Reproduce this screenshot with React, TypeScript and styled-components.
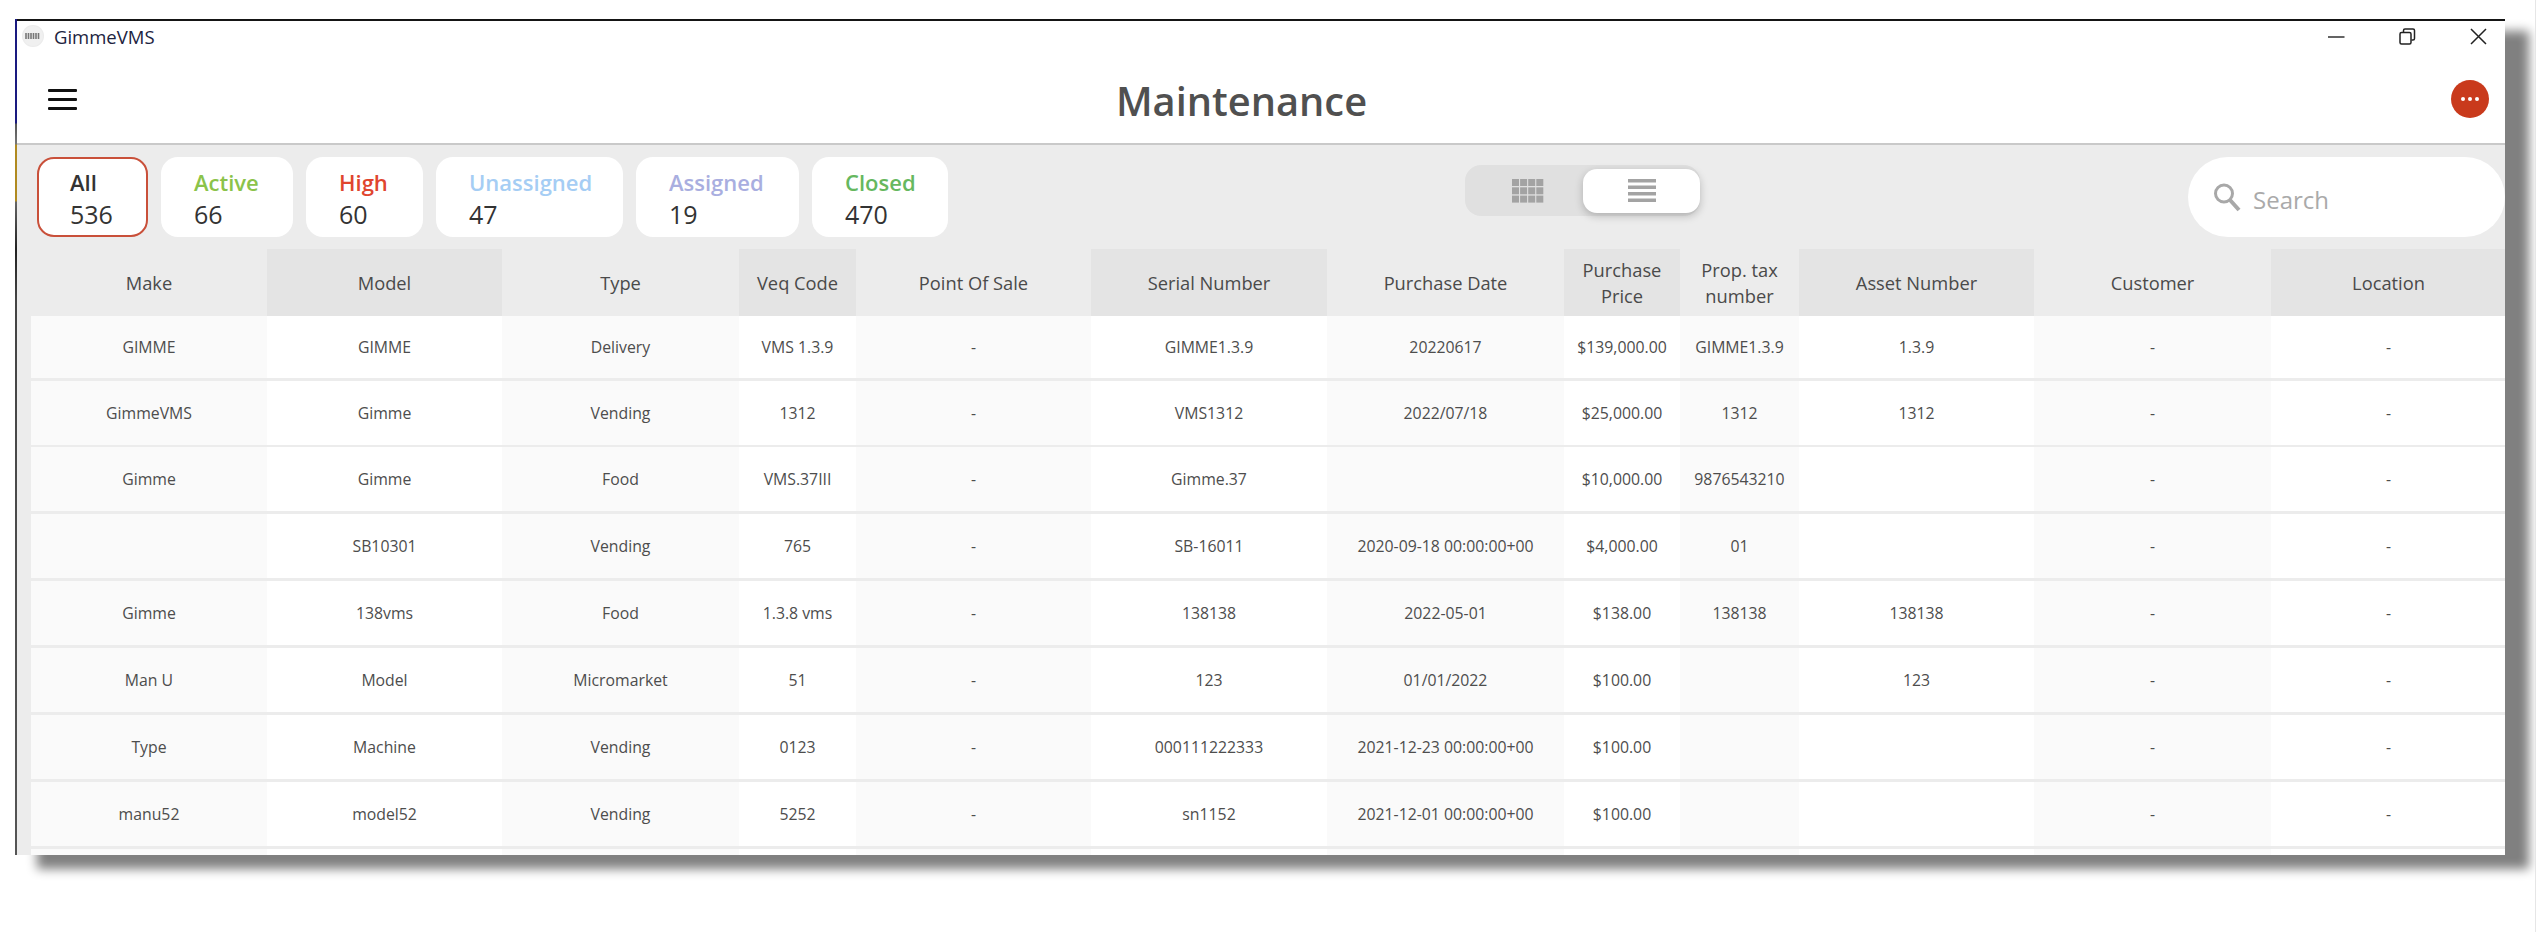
import React from "react";
import styled, { createGlobalStyle } from "styled-components";

const GlobalStyle = createGlobalStyle`
  html, body {
    margin: 0;
    padding: 0;
    background: #fff;
    font-family: "Open Sans", "Noto Sans", sans-serif;
  }
`;

const chips = [
  { label: "All", count: 536, color: "#333333", selected: true, width: 111 },
  { label: "Active", count: 66, color: "#8bc34a", width: 132 },
  { label: "High", count: 60, color: "#e0452e", width: 117 },
  { label: "Unassigned", count: 47, color: "#a5cdf4", width: 187 },
  { label: "Assigned", count: 19, color: "#a9aee0", width: 163 },
  { label: "Closed", count: 470, color: "#66b85f", width: 136 },
];

const columns = [
  "Make",
  "Model",
  "Type",
  "Veq Code",
  "Point Of Sale",
  "Serial Number",
  "Purchase Date",
  "Purchase Price",
  "Prop. tax number",
  "Asset Number",
  "Customer",
  "Location",
];

const rows = [
  ["GIMME", "GIMME", "Delivery", "VMS 1.3.9", "-", "GIMME1.3.9", "20220617", "$139,000.00", "GIMME1.3.9", "1.3.9", "-", "-"],
  ["GimmeVMS", "Gimme", "Vending", "1312", "-", "VMS1312", "2022/07/18", "$25,000.00", "1312", "1312", "-", "-"],
  ["Gimme", "Gimme", "Food", "VMS.37III", "-", "Gimme.37", "", "$10,000.00", "9876543210", "", "-", "-"],
  ["", "SB10301", "Vending", "765", "-", "SB-16011", "2020-09-18 00:00:00+00", "$4,000.00", "01", "", "-", "-"],
  ["Gimme", "138vms", "Food", "1.3.8 vms", "-", "138138", "2022-05-01", "$138.00", "138138", "138138", "-", "-"],
  ["Man U", "Model", "Micromarket", "51", "-", "123", "01/01/2022", "$100.00", "", "123", "-", "-"],
  ["Type", "Machine", "Vending", "0123", "-", "000111222333", "2021-12-23 00:00:00+00", "$100.00", "", "", "-", "-"],
  ["manu52", "model52", "Vending", "5252", "-", "sn1152", "2021-12-01 00:00:00+00", "$100.00", "", "", "-", "-"],
  ["", "", "", "", "", "", "", "", "", "", "", ""],
];

const gridColumns = "236px 235px 237px 117px 235px 236px 237px 116px 119px 235px 237px 235px";

const Page = styled.div`
  width: 2536px;
  height: 932px;
  box-sizing: border-box;
  padding: 19px 0 0 15px;
  border-right: 1px solid #e6e6e6;
  overflow: hidden;
`;

const Frame = styled.div`
  display: flex;
  width: 2490px;
  height: 836px;
  box-shadow: 23px 13px 10px 1px #808080;
`;

const LeftEdge = styled.div`
  width: 2px;
  flex-shrink: 0;
  background: linear-gradient(
    to bottom,
    #1a1a80 0,
    #1a1a80 104px,
    #555 105px,
    #777 125px,
    #b08a20 126px,
    #b08a20 182px,
    #666 183px,
    #222 230px,
    #444 280px,
    #555 100%
  );
`;

const Window = styled.div`
  flex: 1;
  min-width: 0;
  display: flex;
  flex-direction: column;
  border-top: 2px solid #151515;
  background: #fff;
  overflow: hidden;
`;

const TitleBar = styled.div`
  display: flex;
  align-items: center;
  height: 30px;
  padding: 0 0 0 5px;
  flex-shrink: 0;
`;

const AppIcon = styled.div`
  width: 22px;
  height: 22px;
  border-radius: 50%;
  background: radial-gradient(circle, #f0f0f0 60%, #d6d6d6 100%);
  display: flex;
  align-items: center;
  justify-content: center;
`;

const AppName = styled.span`
  margin-left: 10px;
  font-size: 18.5px;
  color: #1c2340;
`;

const WindowButtons = styled.div`
  display: flex;
  align-items: center;
  margin-left: auto;
  padding-right: 18px;
  gap: 54px;
`;

const Header = styled.header`
  display: flex;
  align-items: center;
  justify-content: space-between;
  height: 94px;
  padding: 4px 16px 0 31px;
  box-sizing: border-box;
  border-bottom: 2px solid #c9c9c9;
  flex-shrink: 0;
`;

const MenuButton = styled.div`
  display: flex;
  flex-direction: column;
  justify-content: space-between;
  width: 29px;
  height: 21px;
`;

const MenuLine = styled.span`
  display: block;
  height: 3px;
  border-radius: 1px;
  background: #111;
`;

const Title = styled.h1`
  margin: 4px 0 0 0;
  padding-right: 45px;
  font-size: 39.8px;
  font-weight: 600;
  line-height: 1;
  color: #505050;
`;

const MoreButton = styled.div`
  width: 38px;
  height: 38px;
  border-radius: 50%;
  background: #c93a1c;
  display: flex;
  align-items: center;
  justify-content: center;
  gap: 3px;
`;

const Dot = styled.span`
  width: 4px;
  height: 4px;
  border-radius: 50%;
  background: #fff;
`;

const Content = styled.div`
  flex: 1;
  min-height: 0;
  display: flex;
  flex-direction: column;
  background: #ececec;
  padding: 12px 0 0 14px;
`;

const Toolbar = styled.div`
  display: flex;
  align-items: flex-start;
  height: 80px;
  padding-left: 6px;
  margin-bottom: 12px;
  flex-shrink: 0;
`;

const ChipRow = styled.div`
  display: flex;
  gap: 13px;
`;

const Chip = styled.div<{ $selected?: boolean; $width: number }>`
  width: ${(p) => p.$width}px;
  height: 80px;
  box-sizing: border-box;
  padding-left: ${(p) => (p.$selected ? 31 : 33)}px;
  padding-top: ${(p) => (p.$selected ? 8 : 10)}px;
  border-radius: 17px;
  background: #fff;
  border: ${(p) => (p.$selected ? "2px solid #c9503a" : "none")};
`;

const ChipLabel = styled.div<{ $color: string }>`
  font-size: 22px;
  line-height: 30px;
  font-weight: 600;
  color: ${(p) => p.$color};
`;

const ChipCount = styled.div`
  font-size: 25px;
  line-height: 35px;
  color: #333;
`;

const ViewToggle = styled.div`
  display: flex;
  align-items: center;
  justify-content: space-between;
  width: 235px;
  height: 51px;
  margin: 8px 0 0 517px;
  border-radius: 16px;
  background: #e0e0e0;
`;

const ViewOption = styled.div<{ $active?: boolean }>`
  display: flex;
  align-items: center;
  justify-content: center;
  width: 117px;
  height: 44px;
  box-sizing: border-box;
  padding-left: ${(p) => (p.$active ? 0 : 8)}px;
  border-radius: 14px;
  background: ${(p) => (p.$active ? "#fff" : "transparent")};
  box-shadow: ${(p) => (p.$active ? "0 3px 8px rgba(0, 0, 0, 0.22)" : "none")};
`;

const SearchBox = styled.div`
  display: flex;
  align-items: center;
  width: 317px;
  height: 80px;
  margin-left: auto;
  box-sizing: border-box;
  padding-left: 24px;
  border-radius: 40px;
  background: #fff;
`;

const SearchText = styled.span`
  margin-left: 11px;
  padding-top: 5px;
  font-size: 24px;
  color: #aaaaaa;
`;

const Table = styled.div`
  flex: 1;
  min-height: 0;
  overflow: hidden;
`;

const HeadRow = styled.div`
  display: grid;
  grid-template-columns: ${gridColumns};
  height: 67px;
`;

const HeadCell = styled.div<{ $shaded: boolean }>`
  display: flex;
  align-items: center;
  justify-content: center;
  text-align: center;
  padding: 0 8px;
  font-size: 18.3px;
  line-height: 26px;
  color: #4a4a4a;
  background: ${(p) => (p.$shaded ? "#e4e4e4" : "#ececec")};
`;

const BodyRow = styled.div`
  display: grid;
  grid-template-columns: ${gridColumns};
  height: 64px;
  margin-bottom: 2.9px;

  &:nth-child(2) {
    height: 61.7px;
  }
`;

const Cell = styled.div<{ $shaded: boolean }>`
  display: flex;
  align-items: center;
  justify-content: center;
  white-space: nowrap;
  font-size: 15.8px;
  color: #4d4d4d;
  background: ${(p) => (p.$shaded ? "#ffffff" : "#fafafa")};
`;

export default function App() {
  return (
    <Page>
      <GlobalStyle />
      <Frame>
        <LeftEdge />
        <Window>
          <TitleBar>
            <AppIcon>
              <svg width="16" height="8" viewBox="0 0 16 8">
                <path d="M1 1v6M3.500 1v6M6 1v6M8.500 1v6M11 1v6M13.500 1v6" stroke="#777" strokeWidth="1.6" />
              </svg>
            </AppIcon>
            <AppName>GimmeVMS</AppName>
            <WindowButtons>
              <svg width="17" height="17" viewBox="0 0 17 17">
                <path d="M0 9h16.500" stroke="#222" strokeWidth="1.4" />
              </svg>
              <svg width="17" height="17" viewBox="0 0 17 17" fill="none" stroke="#222" strokeWidth="1.5">
                <rect x="1" y="4.500" width="11" height="11.500" rx="1.500" />
                <path d="M4.500 4V2.500q0-1.500 1.500-1.500h8q1.500 0 1.500 1.500v8q0 1.500-1.500 1.500h-1.500" />
              </svg>
              <svg width="17" height="17" viewBox="0 0 17 17" stroke="#222" strokeWidth="1.5">
                <path d="M1 1l15 15M16 1L1 16" />
              </svg>
            </WindowButtons>
          </TitleBar>
          <Header>
            <MenuButton>
              <MenuLine />
              <MenuLine />
              <MenuLine />
            </MenuButton>
            <Title>Maintenance</Title>
            <MoreButton>
              <Dot />
              <Dot />
              <Dot />
            </MoreButton>
          </Header>
          <Content>
            <Toolbar>
              <ChipRow>
                {chips.map((chip) => (
                  <Chip key={chip.label} $selected={chip.selected} $width={chip.width}>
                    <ChipLabel $color={chip.color}>{chip.label}</ChipLabel>
                    <ChipCount>{chip.count}</ChipCount>
                  </Chip>
                ))}
              </ChipRow>
              <ViewToggle>
                <ViewOption>
                  <svg width="32" height="24" viewBox="0 0 32 24" fill="#a3a3a3">
                    {[0, 8.3, 16.6].map((y) =>
                      [0, 8.1, 16.2, 24.3].map((x) => (
                        <rect key={`${x}-${y}`} x={x} y={y} width="7" height="7" />
                      ))
                    )}
                  </svg>
                </ViewOption>
                <ViewOption $active>
                  <svg width="28" height="24" viewBox="0 0 28 24" fill="#a3a3a3">
                    {[0, 6.5, 13, 19.5].map((y) => (
                      <rect key={y} x="0" y={y} width="28" height="3.5" />
                    ))}
                  </svg>
                </ViewOption>
              </ViewToggle>
              <SearchBox>
                <svg width="30" height="30" viewBox="0 0 30 30" fill="none" stroke="#a8a8a8">
                  <circle cx="12" cy="11.500" r="8.500" strokeWidth="3" />
                  <path d="M18 18l9 10" strokeWidth="4" />
                </svg>
                <SearchText>Search</SearchText>
              </SearchBox>
            </Toolbar>
            <Table>
              <HeadRow>
                {columns.map((column, i) => (
                  <HeadCell key={column} $shaded={i % 2 === 1}>
                    {column}
                  </HeadCell>
                ))}
              </HeadRow>
              {rows.map((row, r) => (
                <BodyRow key={r}>
                  {row.map((value, i) => (
                    <Cell key={i} $shaded={i % 2 === 1}>
                      {value}
                    </Cell>
                  ))}
                </BodyRow>
              ))}
            </Table>
          </Content>
        </Window>
      </Frame>
    </Page>
  );
}
